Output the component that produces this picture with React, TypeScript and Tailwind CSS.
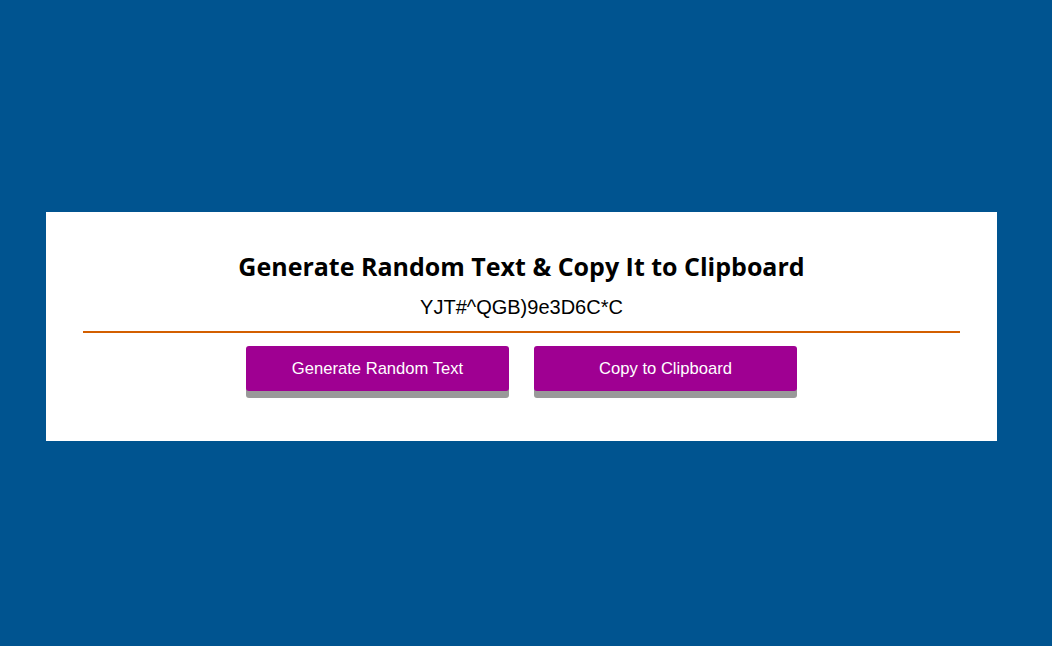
import React from "react";

export default function App() {
  return (
    <div className="w-[1052px] h-[646px] bg-[#005490] pt-[212px] pl-[46px]">
      <div className="w-[951px] h-[229px] bg-white px-[37px] pt-[38px] flex flex-col items-stretch">
        <h1 className="text-center text-[25px] leading-[32px] font-bold text-black [font-family:'Open_Sans',sans-serif]">
          Generate Random Text &amp; Copy It to Clipboard
        </h1>
        <p className="mt-[13px] text-center text-[20px] leading-[24px] text-black [font-family:'Liberation_Sans',Arial,sans-serif]">
          YJT#^QGB)9e3D6C*C
        </p>
        <div className="mt-[12px] h-[2px] bg-[#d35f00]" />
        <div className="mt-[13px] flex justify-center gap-[25px]">
          <button className="w-[263px] h-[45px] pt-[2px] rounded-[3px] bg-[#9f0092] text-white text-[16.6px] shadow-[0_7px_0_#999999] [font-family:'Liberation_Sans',Arial,sans-serif]">
            Generate Random Text
          </button>
          <button className="w-[263px] h-[45px] pt-[2px] rounded-[3px] bg-[#9f0092] text-white text-[16.6px] shadow-[0_7px_0_#999999] [font-family:'Liberation_Sans',Arial,sans-serif]">
            Copy to Clipboard
          </button>
        </div>
      </div>
    </div>
  );
}
